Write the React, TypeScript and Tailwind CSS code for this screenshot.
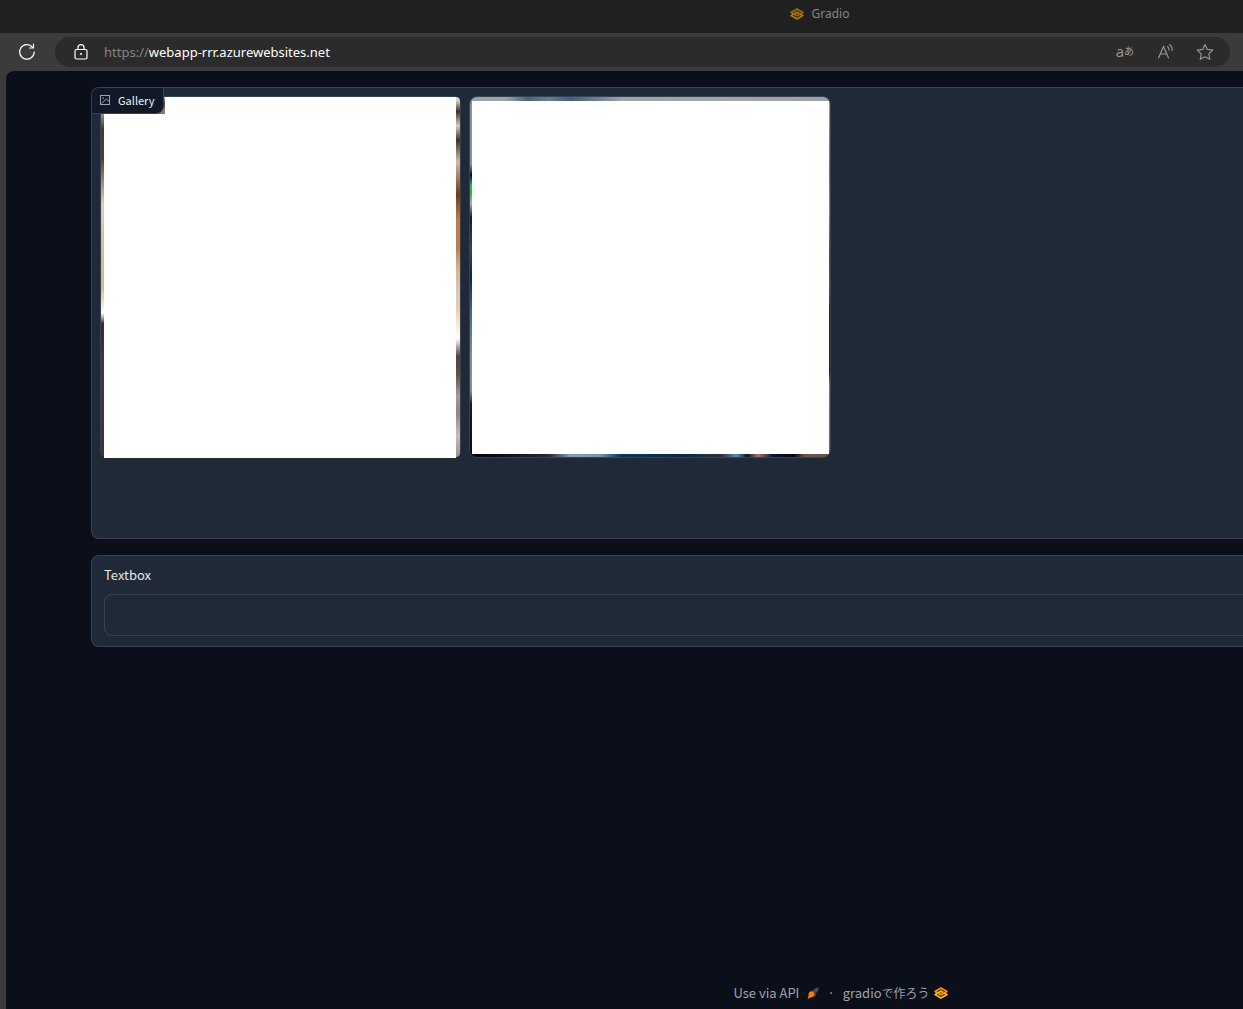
import { useState } from 'react';

function GradioLogo({ className }: { className: string }) {
  return (
    <svg className={className} viewBox="0 0 28 24" fill="none" strokeLinejoin="round">
      <path d="M14 1.500 L26 8 L26 16 L14 22.500 L2 16 L2 8 Z" fill="#5a3a0c" />
      <path d="M7 11.500 L2 8.700 L14 2 L26 8.700 L14 15.500 L9.500 13" stroke="#fb9407" strokeWidth={3} />
      <path d="M21 12.500 L26 15.300 L14 22 L2 15.300 L14 8.500 L18.500 11" stroke="#fdb91c" strokeWidth={3} />
    </svg>
  );
}

function RocketIcon() {
  return (
    <svg className="h-3 w-3" viewBox="0 0 24 24">
      <path d="M23 1 C18 0 14 3 12 7 L8 9 L8 12 L13 17 L16 16 L18 12 C22 9 24 6 23 1 Z" fill="#434b59" />
      <path d="M12 7 L7 7 L4 11 L9 11 Z M18 12 L18 17 L14 20 L14 16 Z" fill="#374151" />
      <circle cx="9" cy="14.500" r="5.500" fill="#ff7c00" />
      <path d="M4 12 L12 20 L7 21 L1 24 L3 18 Z" fill="#ff7c00" />
    </svg>
  );
}

function TitleBar() {
  return (
    <header className="flex h-[33px] items-center justify-center gap-2 bg-[#202020] pb-[6px] pl-[396px] text-[12px] text-[#858585]">
      <GradioLogo className="h-3 w-3.5 opacity-60" />
      <span>Gradio</span>
    </header>
  );
}

function AddressBar() {
  const [url, setUrl] = useState('webapp-rrr.azurewebsites.net');

  return (
    <nav className="flex h-[38px] items-center bg-[#3b3b3b] pl-[18px] pr-[13px]">
      <button aria-label="Refresh" className="text-white">
        <svg className="h-[18px] w-[18px]" viewBox="0 0 18 18" fill="none" stroke="currentColor" strokeWidth={1.2} strokeLinecap="round">
          <path d="M16.200 9 A7.300 7.300 0 1 1 14.500 4.200 M15.500 1 V5 H11.500" />
        </svg>
      </button>
      <div className="ml-[19px] flex h-[30px] flex-1 items-center rounded-full bg-[#2b2b2b] pl-[19px] pr-4 text-[#9a9a9a]">
        <button aria-label="Site information" className="text-white">
          <svg className="h-4 w-3.5" viewBox="0 0 14 16" fill="none" stroke="currentColor" strokeWidth={1.2}>
            <rect x="1" y="5.500" width="12" height="9.500" rx="1.500" />
            <path d="M4 5.500 V3.500 A3 2.900 0 0 1 10 3.500 V5.500" />
            <circle cx="7" cy="10" r="1" fill="currentColor" stroke="none" />
          </svg>
        </button>
        <div className="ml-4 flex min-w-0 flex-1 items-center pt-0.5 text-[13px]">
          <label htmlFor="url" className="text-[#858585]">https://</label>
          <input
            id="url"
            value={url}
            onChange={(e) => setUrl(e.target.value)}
            className="min-w-0 flex-1 bg-transparent text-white outline-none"
          />
        </div>
        <div className="flex items-center gap-[22px]">
          <button aria-label="Translate" className="flex items-center pb-0.5">
            <span className="font-['Open_Sans',sans-serif] text-[15px] leading-4">a</span>
            <span className="font-['Noto_Sans_CJK_JP',sans-serif] text-[10px] leading-4">あ</span>
          </button>
          <button aria-label="Read aloud">
            <svg className="h-[18px] w-[18px]" viewBox="0 0 18 18" fill="none" stroke="currentColor" strokeWidth={1.1} strokeLinecap="round">
              <path d="M2.500 15 L7.500 3.500 L12.500 15 M4.200 11 H10.800" />
              <path d="M11.500 3.500 Q13 4.800 13 7 M13.500 1.500 Q16.700 4 16 7.500" />
            </svg>
          </button>
          <button aria-label="Favorite">
            <svg className="h-[18px] w-[18px]" viewBox="0 0 18 18" fill="none" stroke="currentColor" strokeWidth={1.1} strokeLinejoin="round">
              <path d="M9 1.500 L11.300 6.400 L16.700 7.100 L12.800 10.900 L13.800 16.300 L9 13.700 L4.200 16.300 L5.200 10.900 L1.300 7.100 L6.700 6.400 Z" />
            </svg>
          </button>
        </div>
      </div>
    </nav>
  );
}

function Gallery() {
  return (
    <section className="relative h-[452px] rounded-l-lg border border-r-0 border-[#374151] bg-[#1f2937] p-2">
      <div className="absolute top-0 left-0 z-10 flex items-end">
        <h2 className="z-10 flex h-[26px] w-[72px] items-center gap-2 rounded-tl-[7px] rounded-br-lg border-r border-b border-[#374151] bg-[#111827] pb-px pl-2 text-[11px] text-[#f3f4f6]">
          <svg className="h-[10px] w-[10px] shrink-0 text-[#9ca3af]" viewBox="0 0 10 10" fill="none" stroke="currentColor">
            <rect x="0.500" y="0.500" width="9" height="9" />
            <circle cx="3.200" cy="3.200" r="0.800" fill="currentColor" stroke="none" />
            <path d="M1.500 8.500 L6.300 4 L9.500 6.800" />
          </svg>
          Gallery
        </h2>
        <span className="-ml-1.5 h-[17px] w-[7px] bg-[linear-gradient(to_bottom,#b3a698,#4d4038_40%,#93867d_75%,#7e746e)]" />
      </div>
      <div className="flex gap-2">
        <button
          aria-label="Thumbnail 1"
          className="flex h-[362px] w-[361px] rounded-lg border border-[#374151]"
        >
          <span className="h-full w-[3px] rounded-l-[7px] bg-[linear-gradient(to_bottom,#a79c96_4%,#4a3620_9%,#5b3d18_14%,#6a3511_17%,#a87e60_23%,#eac9ac_30%,#dfba8a_40%,#d9b684_53%,#fff_60%,#3b2a28_63%,#49373a_75%,#41322f)]" />
          <span className="-mb-px flex-1 self-stretch bg-white" />
          <span className="h-full w-[4px] rounded-r-[7px] bg-[linear-gradient(to_bottom,#d8d0c8_1%,#3a302b_4%,#d3cbc4_8%,#3b3029_12%,#c7bdad_18%,#6b3d15_27%,#bd7b4f_34%,#bb7d55_42%,#d8b48d_48%,#d4c8c4_54%,#e6cfac_59%,#fff_67%,#4f4543_72%,#5b4d4a_77%,#a39996_83%,#8f8484_88%,#c4bebf_94%,#97908f)]" />
        </button>
        <button
          aria-label="Thumbnail 2"
          className="flex h-[362px] w-[362px] flex-col overflow-hidden rounded-lg border border-[#374151]"
        >
          <span className="h-1 w-full bg-[linear-gradient(to_right,#9aa5a9_10%,#49627c_16%,#6a7f8f_22%,#435e7d_28%,#6b7f91_35%,#9ea2aa_42%,#a4a4aa_70%,#a39fa5_92%,#93a4a8)]" />
          <span className="flex w-full flex-1">
            <span className="w-0.5 bg-[linear-gradient(to_bottom,#84939d_18%,#030c12_21%,#22c53b_24%,#27b535_26%,#aab0bb_29%,#07202f_33%,#3a4355_42%,#092a44_50%,#4d6882_60%,#7c919d_72%,#8094a0_82%,#24191c_86%,#050b18)]" />
            <span className="flex-1 bg-white" />
            <span className="w-px bg-[linear-gradient(to_bottom,#93a4a8,#567288_20%,#8d857f_30%,#245069_45%,#3c6279_52%,#172033_60%,#26201f_77%,#82776f_80%,#73604f)]" />
          </span>
          <span className="h-[3px] w-full bg-[linear-gradient(to_right,#03090f_5%,#2b2933_22%,#84a2b1_28%,#7896a9_36%,#073552_42%,#092b43_60%,#302e39_70%,#5e8bad_74%,#081522_77%,#a37665_80%,#071a31_84%,#05090f_90%,#6c5347_93%)]" />
        </button>
      </div>
    </section>
  );
}

function Textbox() {
  const [value, setValue] = useState('');

  return (
    <section className="rounded-l-lg border border-r-0 border-[#374151] bg-[#1f2937] pt-[9px] pb-[10px] pl-3">
      <label htmlFor="textbox" className="block text-[13px] leading-5 text-[#e5e7eb]">Textbox</label>
      <input
        id="textbox"
        value={value}
        onChange={(e) => setValue(e.target.value)}
        className="mt-[9px] block h-[42px] w-full rounded-l-lg border border-r-0 border-[#374151] bg-[#1f2937] px-2.5 text-[13px] text-[#f3f4f6] outline-none"
      />
    </section>
  );
}

function Footer() {
  return (
    <footer className="mt-auto flex items-center justify-center pb-[6px] pl-[432px] text-[13px] leading-5 text-[#9ca3af]">
      <a href="#api" className="flex items-center gap-2">
        Use via API
        <RocketIcon />
      </a>
      <span className="mx-2">·</span>
      <a href="#gradio" className="flex items-center gap-1">
        <span>gradio<span className="text-[12px]">で作ろう</span></span>
        <GradioLogo className="h-3 w-3.5" />
      </a>
    </footer>
  );
}

export default function App() {
  return (
    <div className="flex min-h-screen flex-col bg-[#3b3b3b] font-['Noto_Sans',sans-serif]">
      <TitleBar />
      <AddressBar />
      <main className="ml-[6px] flex flex-1 flex-col gap-4 rounded-tl-lg bg-[#0b0f19] pt-4 font-['Noto_Sans_CJK_JP',sans-serif]">
        <div className="flex flex-col gap-4 pl-[85px]">
          <Gallery />
          <Textbox />
        </div>
        <Footer />
      </main>
    </div>
  );
}
